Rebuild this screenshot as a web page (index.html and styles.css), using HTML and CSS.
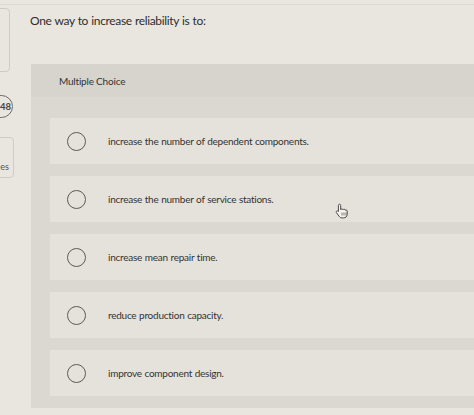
FILE: index.html
```html
<!DOCTYPE html>
<html>
<head>
<meta charset="utf-8">
<link rel="stylesheet" href="styles.css">
</head>
<body>
<div class="page">
  <aside class="sidebar">
    <div class="side-card side-card-tall"></div>
    <div class="side-pill">48</div>
    <div class="side-card side-card-small"><span>es</span></div>
  </aside>
  <main class="main">
    <p class="question">One way to increase reliability is to:</p>
    <section class="panel">
      <div class="panel-header">Multiple Choice</div>
      <div class="options">
        <div class="option"><span class="radio"></span><span class="label">increase the number of dependent components.</span></div>
        <div class="option"><span class="radio"></span><span class="label">increase the number of service stations.</span></div>
        <div class="option"><span class="radio"></span><span class="label">increase mean repair time.</span></div>
        <div class="option"><span class="radio"></span><span class="label">reduce production capacity.</span></div>
        <div class="option"><span class="radio"></span><span class="label">improve component design.</span></div>
      </div>
    </section>
  </main>
</div>
<svg class="cursor" width="14" height="16" viewBox="0 0 14 16">
  <path d="M4.5 1.2c.7 0 1.2.5 1.2 1.2v4.3c.2-.5.7-.8 1.2-.8.6 0 1 .4 1.1.9.2-.4.6-.6 1.1-.6.6 0 1.1.4 1.1 1 .2-.2.5-.3.8-.3.7 0 1.2.5 1.2 1.2v3.2c0 2.2-1.6 3.6-3.7 3.6H7c-1.3 0-2.2-.6-2.9-1.6L1.4 9.6c-.4-.6-.2-1.3.4-1.6.5-.3 1.1-.1 1.5.3l.1.2V2.4c0-.7.5-1.2 1.1-1.2z" fill="#f4f2ec" stroke="#4a4a4a" stroke-width="1"/>
  <path d="M7 9.5v3M9 9.5v3M11 9.5v3" stroke="#4a4a4a" stroke-width=".7"/>
</svg>
</body>
</html>
```
FILE: styles.css
```css
html, body {
  margin: 0;
  padding: 0;
}
body {
  background: #e9e6df;
  font-family: Lato, "Open Sans", "Liberation Sans", sans-serif;
  color: #333;
  width: 474px;
  height: 415px;
  overflow: hidden;
  position: relative;
}
.page {
  display: flex;
  border-top: 1px solid #dcd9d2;
  margin-top: 4px;
}
.sidebar {
  width: 14px;
  flex-shrink: 0;
  overflow: hidden;
  display: flex;
  flex-direction: column;
  align-items: flex-end;
  padding-top: 3px;
}
.side-card {
  border: 1px solid #cfccc5;
  border-radius: 4px;
  box-sizing: border-box;
  width: 40px;
}
.side-card-tall {
  height: 64px;
  margin-right: 4px;
}
.side-pill {
  margin-top: 23px;
  margin-right: 1px;
  width: 34px;
  height: 23px;
  border: 1px solid #6b6b68;
  border-radius: 12px;
  box-sizing: border-box;
  font-size: 9.5px;
  font-weight: 700;
  color: #444;
  display: flex;
  align-items: center;
  justify-content: flex-end;
  padding-right: 1px;
}
.side-card-small {
  margin-top: 19px;
  height: 41px;
  display: flex;
  align-items: flex-end;
  justify-content: flex-end;
  padding: 0 4px 5px 0;
  font-size: 9px;
  color: #555;
}
.main {
  flex: 1;
  margin-left: 16px;
  min-width: 0;
}
.question {
  margin: 7px 0 0 0;
  font-size: 12px;
  letter-spacing: -0.35px;
  word-spacing: 0.5px;
  line-height: 18px;
  color: #2e2e2e;
}
.panel {
  margin-top: 34px;
  margin-left: 1px;
  background: #dad7d0;
}
.panel-header {
  height: 33px;
  display: flex;
  align-items: center;
  padding-left: 28px;
  font-size: 10px;
  letter-spacing: -0.2px;
  color: #333;
  background: #d7d4cd;
}
.options {
  display: flex;
  flex-direction: column;
  gap: 12px;
  padding: 21px 0 12px 19px;
  background: #dbd8d1;
}
.option {
  height: 46px;
  background: #e5e2db;
  display: flex;
  align-items: center;
}
.radio {
  width: 17px;
  height: 17px;
  border: 1.3px solid #5a5a58;
  border-radius: 50%;
  margin-left: 17px;
  flex-shrink: 0;
}
.label {
  margin-left: 22px;
  font-size: 10px;
  letter-spacing: -0.25px;
  word-spacing: 0.4px;
  color: #333;
}
.cursor {
  position: absolute;
  left: 335px;
  top: 203px;
}
```
